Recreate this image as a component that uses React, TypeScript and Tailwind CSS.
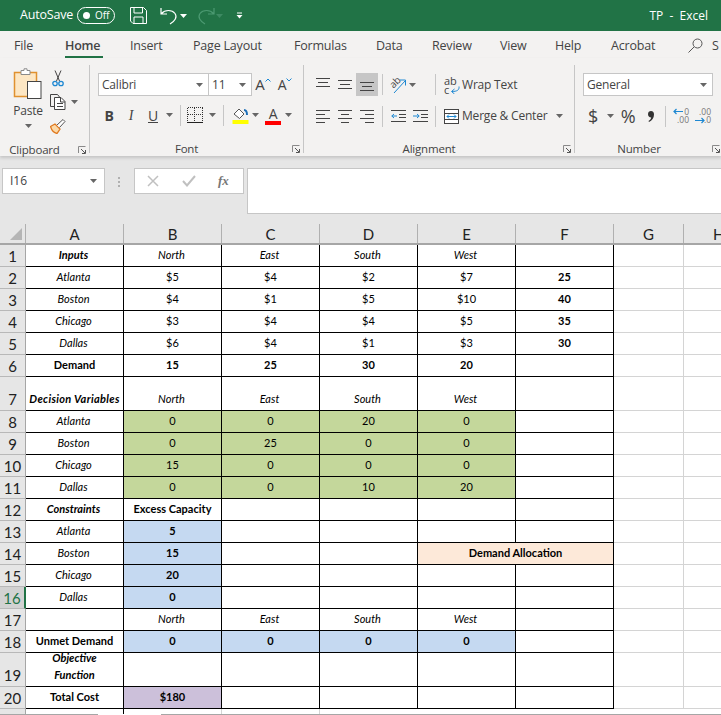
import React from "react";

type Cell = { t?: string; s?: string; bg?: string; span?: boolean };

const ital = "italic pr-[2px]";
const bold = "font-bold";
const both = "font-bold italic pr-[2px]";
const green = "bg-[#c4d79b]";
const blue = "bg-[#c5d9f1]";

const heads = (first: Cell): Cell[] => [
  first,
  { t: "North", s: ital },
  { t: "East", s: ital },
  { t: "South", s: ital },
  { t: "West", s: ital },
  {},
];

const city = (name: string, vals: string[], last?: string): Cell[] => [
  { t: name, s: ital },
  ...vals.map((t) => ({ t })),
  { t: last, s: bold },
];

const decision = (name: string, vals: string[]): Cell[] => [
  { t: name, s: ital },
  ...vals.map((t) => ({ t, bg: green })),
  {},
];

const excess = (name: string, val: string, rest: Cell[] = [{}, {}, {}, {}]): Cell[] => [
  { t: name, s: ital },
  { t: val, s: bold, bg: blue },
  ...rest,
];

const rows: { n: number; h: string; cells: Cell[]; tall?: boolean }[] = [
  { n: 1, h: "h-[22px]", cells: heads({ t: "Inputs", s: both }) },
  { n: 2, h: "h-[22px]", cells: city("Atlanta", ["$5", "$4", "$2", "$7"], "25") },
  { n: 3, h: "h-[22px]", cells: city("Boston", ["$4", "$1", "$5", "$10"], "40") },
  { n: 4, h: "h-[22px]", cells: city("Chicago", ["$3", "$4", "$4", "$5"], "35") },
  { n: 5, h: "h-[22px]", cells: city("Dallas", ["$6", "$4", "$1", "$3"], "30") },
  {
    n: 6,
    h: "h-[22px]",
    cells: [
      { t: "Demand", s: bold },
      { t: "15", s: bold },
      { t: "25", s: bold },
      { t: "30", s: bold },
      { t: "20", s: bold },
      {},
    ],
  },
  { n: 7, h: "h-[34px]", tall: true, cells: heads({ t: "Decision Variables", s: "font-bold italic tracking-[0.33px]" }) },
  { n: 8, h: "h-[22px]", cells: decision("Atlanta", ["0", "0", "20", "0"]) },
  { n: 9, h: "h-[22px]", cells: decision("Boston", ["0", "25", "0", "0"]) },
  { n: 10, h: "h-[22px]", cells: decision("Chicago", ["15", "0", "0", "0"]) },
  { n: 11, h: "h-[22px]", cells: decision("Dallas", ["0", "0", "10", "20"]) },
  {
    n: 12,
    h: "h-[22px]",
    cells: [{ t: "Constraints", s: both }, { t: "Excess Capacity", s: bold }, {}, {}, {}, {}],
  },
  { n: 13, h: "h-[22px]", cells: excess("Atlanta", "5") },
  {
    n: 14,
    h: "h-[22px]",
    cells: excess("Boston", "15", [{}, {}, { t: "Demand Allocation", s: bold, bg: "bg-[#fde9d9]", span: true }]),
  },
  { n: 15, h: "h-[22px]", cells: excess("Chicago", "20") },
  { n: 16, h: "h-[22px]", cells: excess("Dallas", "0") },
  { n: 17, h: "h-[22px]", cells: heads({}) },
  {
    n: 18,
    h: "h-[22px]",
    cells: [
      { t: "Unmet Demand", s: bold },
      { t: "0", s: bold, bg: blue },
      { t: "0", s: bold, bg: blue },
      { t: "0", s: bold, bg: blue },
      { t: "0", s: bold, bg: blue },
      {},
    ],
  },
  { n: 19, h: "h-[34px]", tall: true, cells: [{ t: "Objective Function", s: "font-bold italic" }, {}, {}, {}, {}, {}] },
  { n: 20, h: "h-[22px]", cells: [{ t: "Total Cost", s: bold }, { t: "$180", s: bold, bg: "bg-[#ccc0da]" }, {}, {}, {}, {}] },
];

function Caret({ light }: { light?: boolean }) {
  return (
    <svg width="7" height="4" viewBox="0 0 7 4" className="shrink-0">
      <path d="M0 0h7L3.5 4z" fill={light ? "#3e8a63" : "#666"} />
    </svg>
  );
}

function Sep({ className }: { className: string }) {
  return <div className={`h-[21px] w-px shrink-0 bg-[#c6c6c6] ${className}`} />;
}

function Btn({ w, children, className = "" }: { w: string; children?: React.ReactNode; className?: string }) {
  return <div className={`flex h-[22px] shrink-0 items-center justify-center ${w} ${className}`}>{children}</div>;
}

function Launcher() {
  return (
    <div className="flex h-[14px] w-[20px] shrink-0 items-center pl-[9px]">
      <svg width="8" height="8" viewBox="0 0 8 8">
        <path d="M0.5 7V0.5H7.5" fill="none" stroke="#8a8a8a" />
        <path d="M3 3L7 7M4 7.5H7.5V4" fill="none" stroke="#555" />
      </svg>
    </div>
  );
}

function GroupLabel({ text }: { text: string }) {
  return (
    <div className="flex h-[16px] items-center pt-[8px]">
      <div className="flex-1 text-center text-[11.5px] leading-none text-[#444]">{text}</div>
      <Launcher />
    </div>
  );
}

function Combo({ text, w, className = "" }: { text: string; w: string; className?: string }) {
  return (
    <div className={`flex h-[23px] shrink-0 items-center justify-between border border-[#c6c6c6] bg-white pl-[3px] pr-[5px] text-[12px] text-[#444] ${w} ${className}`}>
      <span>{text}</span>
      <Caret />
    </div>
  );
}

function Lines({ kind }: { kind: string }) {
  const d: Record<string, string> = {
    top: "M1 1.5h14M3 5.5h10M1 9.5h14",
    mid: "M1 3.5h14M3 7.5h10M1 11.5h14",
    bot: "M1 5.5h14M3 9.5h10M1 13.5h14",
    left: "M1 2.5h14M1 6.5h9M1 10.5h14M1 14.5h9",
    center: "M1 2.5h14M4 6.5h8M1 10.5h14M4 14.5h8",
    right: "M1 2.5h14M6 6.5h9M1 10.5h14M6 14.5h9",
  };
  return (
    <svg width="16" height="16" viewBox="0 0 16 16">
      <path d={d[kind]} stroke="#444" fill="none" />
    </svg>
  );
}

function Indent({ flip }: { flip?: boolean }) {
  return (
    <svg width="15" height="14" viewBox="0 0 15 14">
      <path d="M0 1.5h15M8 5.5h7M8 8.5h7M0 12.5h15" stroke="#444" fill="none" />
      <path d={flip ? "M0 7h6M4 5l2.2 2L4 9" : "M6 7H0.8M3 5L0.8 7L3 9"} stroke="#1e88d2" fill="none" />
    </svg>
  );
}

function Clipboard() {
  return (
    <svg width="30" height="32" viewBox="0 0 30 32">
      <rect x="1.5" y="4.5" width="22" height="24" fill="#fde7c4" stroke="#e0912f" strokeWidth="1.5" />
      <path d="M8 4.5V2.5H11V0.8H14V2.5H17V6.5H8z" fill="#fff" stroke="#8a8a8a" />
      <rect x="14.5" y="13.5" width="13.5" height="17" fill="#fff" stroke="#444" />
    </svg>
  );
}

function Scissors() {
  return (
    <svg width="12" height="17" viewBox="0 0 12 17">
      <path d="M3 0.5L7.5 11M9 0.5L4.5 11" stroke="#444" fill="none" />
      <circle cx="3" cy="13.5" r="2.2" fill="none" stroke="#1e88d2" strokeWidth="1.3" />
      <circle cx="9" cy="13.5" r="2.2" fill="none" stroke="#1e88d2" strokeWidth="1.3" />
    </svg>
  );
}

function CopyIcon() {
  return (
    <svg width="16" height="16" viewBox="0 0 16 16">
      <path d="M4.5 12.5H0.5V0.5H7.5L9.5 3" fill="none" stroke="#444" />
      <path d="M4.5 3.5H11L15 7.5V15.5H4.5z" fill="#fff" stroke="#444" />
      <path d="M7 9.5h6M7 12.5h6M10.5 3.5V8H15" fill="none" stroke="#444" />
    </svg>
  );
}

function Painter() {
  return (
    <svg width="16" height="16" viewBox="0 0 16 16">
      <path d="M0.5 8.5L5 6L10 11L7 15.5C4 15 1.5 12 0.5 8.5z" fill="#fbd9a8" stroke="#e0791f" strokeWidth="1.3" />
      <path d="M7 7L13 1.5L15 3.5L9.5 9.5" fill="#fff" stroke="#555" />
    </svg>
  );
}

function Borders() {
  return (
    <svg width="16" height="16" viewBox="0 0 16 16" shapeRendering="crispEdges">
      <path d="M0.5 0.5h15M0.5 7.5h15M0.5 0.5v14M7.5 0.5v14M15.5 0.5v14" stroke="#333" strokeDasharray="1 1" fill="none" />
      <path d="M0 15h16" stroke="#222" strokeWidth="1" />
    </svg>
  );
}

function FillBucket() {
  return (
    <svg width="17" height="17" viewBox="0 0 17 17">
      <path d="M2 7L7 2L12 7L7.5 11.5z" fill="#fff" stroke="#555" />
      <path d="M12 3C14 3 15 5 15 8" fill="none" stroke="#1e6fb8" strokeWidth="2" />
      <rect x="0.5" y="13" width="16" height="4" fill="#ffff00" />
    </svg>
  );
}

function Orient() {
  return (
    <div className="relative h-[18px] w-[18px] text-[10px] leading-none text-[#444]">
      <span className="absolute left-0 top-[1px] -rotate-45">ab</span>
      <svg width="18" height="18" viewBox="0 0 18 18" className="absolute left-0 top-0">
        <path d="M5 17L16 5M11 4h5.5v5.5" fill="none" stroke="#1e88d2" />
      </svg>
    </div>
  );
}

function WrapIcon() {
  return (
    <div className="relative h-[19px] w-[16px] pt-px text-[11px] leading-[9px] text-[#444]">
      <div>ab</div>
      <div>c</div>
      <svg width="10" height="8" viewBox="0 0 10 8" className="absolute bottom-0 right-0">
        <path d="M9 0.5C9.5 4 7 5.5 2 5.5M4.5 3L1.5 5.5L4.5 8" fill="none" stroke="#1e88d2" />
      </svg>
    </div>
  );
}

function MergeIcon() {
  return (
    <svg width="15" height="15" viewBox="0 0 15 15">
      <rect x="0.5" y="0.5" width="14" height="14" fill="#fff" stroke="#444" />
      <path d="M0.5 4.5h14M0.5 10.5h14" stroke="#444" />
      <path d="M3 7.5h9M5 5.5L3 7.5L5 9.5M10 5.5L12 7.5L10 9.5" fill="none" stroke="#1e88d2" />
    </svg>
  );
}

function Decimal({ more }: { more?: boolean }) {
  return (
    <div className="relative h-[16px] w-[16px] text-[8.5px] leading-[8px] tracking-normal text-[#777]">
      <div className="text-right">{more ? "0" : ".00"}</div>
      <div className="text-right">{more ? ".00" : ".0"}</div>
      <svg width="10" height="7" viewBox="0 0 10 7" className={`absolute left-0 ${more ? "top-0" : "bottom-0"}`}>
        <path d={more ? "M10 3.5H1M3.5 1L1 3.5L3.5 6" : "M0 3.5H9M6.5 1L9 3.5L6.5 6"} fill="none" stroke="#1e88d2" strokeWidth="1.2" />
      </svg>
    </div>
  );
}

function Chevron({ down }: { down?: boolean }) {
  return (
    <svg width="6" height="4" viewBox="0 0 6 4" className="-mt-[9px] shrink-0">
      <path d={down ? "M0.5 0.5L3 3L5.5 0.5" : "M0.5 3.5L3 1L5.5 3.5"} fill="none" stroke="#1e88d2" />
    </svg>
  );
}

const tabs = [
  { t: "File", c: "ml-[14px] w-[19px]" },
  { t: "Home", c: "ml-[32px] w-[38px]" },
  { t: "Insert", c: "ml-[27px] w-[32px]" },
  { t: "Page Layout", c: "ml-[31px] w-[71px]" },
  { t: "Formulas", c: "ml-[30px] w-[53px]" },
  { t: "Data", c: "ml-[29px] w-[27px]" },
  { t: "Review", c: "ml-[29px] w-[40px]" },
  { t: "View", c: "ml-[28px] w-[27px]" },
  { t: "Help", c: "ml-[28px] w-[26px]" },
  { t: "Acrobat", c: "ml-[30px] w-[46px]" },
];

function TitleBar() {
  return (
    <div className="flex h-[31px] items-center bg-[#217346] text-white">
      <span className="ml-[20px] w-[50px] whitespace-nowrap text-[12.5px] tracking-[-0.2px]">AutoSave</span>
      <div className="ml-[7px] flex h-[17px] w-[38px] items-center rounded-full border border-white pl-[5px]">
        <div className="h-[7px] w-[7px] rounded-full bg-white" />
        <span className="ml-[5px] text-[10px]">Off</span>
      </div>
      <svg width="17" height="17" viewBox="0 0 17 17" className="ml-[15px]">
        <path d="M0.5 0.5H13.5L16.5 3.5V16.5H3L0.5 14z" fill="none" stroke="#fff" />
        <path d="M4 0.5V6H12.5V0.5M4 16.5V10H13V16.5" fill="none" stroke="#fff" />
      </svg>
      <svg width="18" height="18" viewBox="0 0 18 18" className="ml-[13px]">
        <path d="M1 1V7H7M1.5 6.5C5 2.5 12 2.5 15 6.5C17.5 10 15 14 10 17" fill="none" stroke="#fff" strokeWidth="1.2" />
      </svg>
      <svg width="7" height="4" viewBox="0 0 7 4" className="ml-[2px]">
        <path d="M0 0h7L3.5 4z" fill="#fff" />
      </svg>
      <svg width="18" height="18" viewBox="0 0 18 18" className="ml-[10px]">
        <path d="M17 1V7H11M16.5 6.5C13 2.5 6 2.5 3 6.5C0.5 10 3 14 8 17" fill="none" stroke="#4c9a72" strokeWidth="1.2" />
      </svg>
      <div className="ml-[1px]">
        <Caret light />
      </div>
      <svg width="7" height="7" viewBox="0 0 7 7" className="ml-[13px]">
        <path d="M1 1h5" stroke="#fff" />
        <path d="M0.5 3h6L3.5 6.5z" fill="#fff" />
      </svg>
      <span className="ml-auto mr-[13px] whitespace-pre text-[12px]">TP  -  Excel</span>
    </div>
  );
}

function TabRow() {
  return (
    <div className="flex h-[27px] items-start bg-[#f3f2f1] pt-[6px] text-[12.5px] tracking-[-0.2px] text-[#444]">
      {tabs.map((tab) =>
        tab.t === "Home" ? (
          <div key={tab.t} className={`${tab.c} flex h-[21px] shrink-0 flex-col whitespace-nowrap border-b-[2px] border-[#217346] font-semibold text-[#444]`}>
            {tab.t}
          </div>
        ) : (
          <div key={tab.t} className={`${tab.c} shrink-0 whitespace-nowrap`}>
            {tab.t}
          </div>
        )
      )}
      <svg width="15" height="15" viewBox="0 0 15 15" className="ml-[31px] mt-[1px] shrink-0">
        <circle cx="9.5" cy="5.5" r="4.5" fill="none" stroke="#555" />
        <path d="M6 9L0.5 14.5" stroke="#555" />
      </svg>
      <span className="ml-[9px]">S</span>
    </div>
  );
}

function Ribbon() {
  return (
    <div className="relative z-10 flex h-[98px] bg-[#f3f2f1] pb-[3px] pt-[7px] tracking-[-0.2px] shadow-[0_2px_3px_rgba(0,0,0,0.15)]">
      {/* Clipboard */}
      <div className="flex w-[90px] shrink-0 flex-col border-r border-[#c6c6c6]">
        <div className="flex flex-1">
          <div className="ml-[13px] flex w-[30px] flex-col items-center pt-[3px]">
            <Clipboard />
            <span className="mt-[3px] text-[12px] leading-[16px] text-[#444]">Paste</span>
            <div className="mt-[5px]">
              <Caret />
            </div>
          </div>
          <div className="ml-[7px] flex flex-col">
            <Btn w="w-[16px]" className="mt-[1px] h-[24px]">
              <Scissors />
            </Btn>
            <div className="flex h-[24px] items-center">
              <CopyIcon />
              <div className="ml-[5px]">
                <Caret />
              </div>
            </div>
            <Btn w="w-[16px]" className="h-[24px]">
              <Painter />
            </Btn>
          </div>
        </div>
        <GroupLabel text="Clipboard" />
      </div>

      {/* Font */}
      <div className="flex w-[214px] shrink-0 flex-col border-r border-[#c6c6c6]">
        <div className="flex-1 pt-[8px]">
          <div className="flex items-center pl-[8px]">
            <Combo text="Calibri" w="w-[111px]" />
            <Combo text="11" w="w-[44px]" className="-ml-px" />
            <Btn w="w-[22px]" className="text-[15px] text-[#444]">
              A
              <Chevron />
            </Btn>
            <Btn w="w-[22px]" className="text-[14px] text-[#444]">
              A
              <Chevron down />
            </Btn>
          </div>
          <div className="mt-[8px] flex items-center pl-[8px] font-['Liberation_Serif',serif] text-[14px] text-[#444]">
            <Btn w="w-[22px]" className="font-['Open_Sans',sans-serif] font-bold">B</Btn>
            <Btn w="w-[22px]" className="italic">I</Btn>
            <Btn w="w-[22px]" className="font-['Open_Sans',sans-serif] underline">U</Btn>
            <Btn w="w-[11px]"><Caret /></Btn>
            <Sep className="ml-[5px]" />
            <Btn w="w-[28px]"><Borders /></Btn>
            <Btn w="w-[7px]"><Caret /></Btn>
            <Sep className="ml-[7px]" />
            <Btn w="w-[22px]" className="ml-[5px]"><FillBucket /></Btn>
            <Btn w="w-[8px]"><Caret /></Btn>
            <div className="ml-[3px] flex h-[22px] w-[22px] shrink-0 flex-col items-center justify-center font-['Open_Sans',sans-serif] text-[14px] leading-[15px] text-[#444]">
              A
              <div className="h-[4px] w-[16px] bg-[#ff0000]" />
            </div>
            <Btn w="w-[9px]"><Caret /></Btn>
          </div>
        </div>
        <GroupLabel text="Font" />
      </div>

      {/* Alignment */}
      <div className="flex w-[271px] shrink-0 flex-col border-r border-[#c6c6c6]">
        <div className="flex-1 pt-[8px] text-[12px] text-[#444]">
          <div className="flex h-[23px] items-center pl-[8px]">
            <Btn w="w-[22px]"><Lines kind="top" /></Btn>
            <Btn w="w-[22px]"><Lines kind="mid" /></Btn>
            <Btn w="w-[22px]" className="h-[23px] bg-[#c6c6c6]"><Lines kind="bot" /></Btn>
            <Sep className="ml-[4px]" />
            <Btn w="w-[22px]" className="ml-[4px]"><Orient /></Btn>
            <Btn w="w-[7px]"><Caret /></Btn>
            <Sep className="ml-[19px]" />
            <Btn w="w-[18px]" className="ml-[7px]"><WrapIcon /></Btn>
            <span className="ml-px">Wrap Text</span>
          </div>
          <div className="mt-[9px] flex h-[22px] items-center pl-[8px]">
            <Btn w="w-[22px]"><Lines kind="left" /></Btn>
            <Btn w="w-[22px]"><Lines kind="center" /></Btn>
            <Btn w="w-[22px]"><Lines kind="right" /></Btn>
            <Sep className="ml-[4px]" />
            <Btn w="w-[22px]" className="ml-[4px]"><Indent /></Btn>
            <Btn w="w-[22px]"><Indent flip /></Btn>
            <Sep className="ml-[4px]" />
            <Btn w="w-[18px]" className="ml-[6px]"><MergeIcon /></Btn>
            <span className="ml-[2px]">Merge &amp; Center</span>
            <div className="ml-[9px]"><Caret /></div>
          </div>
        </div>
        <GroupLabel text="Alignment" />
      </div>

      {/* Number */}
      <div className="flex w-[148px] shrink-0 flex-col">
        <div className="flex-1 pt-[8px]">
          <div className="flex pl-[8px]">
            <Combo text="General" w="w-[130px]" />
          </div>
          <div className="mt-[9px] flex items-center pl-[7px] text-[#444]">
            <Btn w="w-[22px]" className="text-[18px]">$</Btn>
            <Btn w="w-[8px]" className="ml-[2px]"><Caret /></Btn>
            <Btn w="w-[22px]" className="ml-[3px] text-[18px]">%</Btn>
            <Btn w="w-[22px]" className="ml-px">
              <svg width="6" height="11" viewBox="0 0 6 11">
                <path d="M3 0C5 0 6 1.5 6 3.5C6 7 4 9.5 1 11L0.5 10C2 9 3 8 3.2 6.5C1.2 6.5 0 5 0 3.2C0 1.2 1.3 0 3 0z" fill="#333" />
              </svg>
            </Btn>
            <Sep className="ml-[3px]" />
            <Btn w="w-[22px]" className="ml-[4px]"><Decimal more /></Btn>
            <Btn w="w-[22px]"><Decimal /></Btn>
          </div>
        </div>
        <GroupLabel text="Number" />
      </div>
    </div>
  );
}

function FormulaBar() {
  return (
    <div className="flex h-[68px] items-start bg-[#e6e6e6] pt-[12px]">
      <div className="ml-[2px] flex h-[26px] w-[103px] items-center justify-between border border-[#c6c6c6] bg-white pl-[7px] pr-[7px] text-[12px] text-[#444]">
        <span>I16</span>
        <Caret />
      </div>
      <div className="ml-[13px] mt-[9px] flex flex-col gap-[2px]">
        <div className="h-[2px] w-[2px] bg-[#b0b0b0]" />
        <div className="h-[2px] w-[2px] bg-[#b0b0b0]" />
        <div className="h-[2px] w-[2px] bg-[#b0b0b0]" />
      </div>
      <div className="ml-[14px] flex h-[26px] w-[110px] items-center border border-[#c6c6c6] bg-white">
        <svg width="12" height="12" viewBox="0 0 12 12" className="ml-[12px]">
          <path d="M1 1L11 11M11 1L1 11" stroke="#c0c0c0" strokeWidth="1.5" />
        </svg>
        <svg width="14" height="12" viewBox="0 0 14 12" className="ml-[23px]">
          <path d="M1 6L5 10.5L13 1" fill="none" stroke="#c0c0c0" strokeWidth="2" />
        </svg>
        <span className="ml-[22px] font-['Liberation_Serif',serif] text-[13px] font-bold italic text-[#777]">fx</span>
      </div>
      <div className="ml-[3px] h-[46px] flex-1 border border-r-0 border-[#c6c6c6] bg-white" />
    </div>
  );
}

function ColumnHeaders() {
  const cols = ["A", "B", "C", "D", "E", "F"];
  return (
    <div className="flex h-[21px] border-b-2 border-[#a6a6a6] bg-[#e6e6e6] font-['Lato',sans-serif] text-[15px] leading-[21px] text-[#222]">
      <div className="flex w-[26px] shrink-0 items-end justify-end border-r border-[#b0b0b0] pb-[3px] pr-[3px]">
        <svg width="12" height="12" viewBox="0 0 12 12">
          <path d="M12 0V12H0z" fill="#b5b5b5" />
        </svg>
      </div>
      {cols.map((c) => (
        <div key={c} className="w-[98px] shrink-0 border-r border-[#b0b0b0] text-center">
          {c}
        </div>
      ))}
      <div className="w-[70px] shrink-0 border-r border-[#b0b0b0] text-center">G</div>
      <div className="flex-1 pl-[29px]">H</div>
    </div>
  );
}

function SheetRow({ n, h, cells, tall }: { n: number; h: string; cells: Cell[]; tall?: boolean }) {
  const active = n === 16;
  const wrap = n === 19;
  return (
    <div className={`flex ${h}`}>
      <div
        className={`flex w-[26px] shrink-0 justify-center border-b border-[#b8b8b8] text-[15px] leading-[20px] ${tall ? "items-end pb-[1px]" : "items-center"} ${
          active ? "border-r-2 border-r-[#217346] bg-[#d2d2d2] text-[#217346]" : "border-r border-r-[#a6a6a6] bg-[#e6e6e6] text-[#222]"
        }`}
      >
        {n}
      </div>
      {cells.map((c, i) => (
        <div
          key={i}
          className={`flex shrink-0 justify-center border-b border-r border-black text-center text-[11px] text-black ${c.span ? "w-[196px]" : "w-[98px]"} ${
            tall ? "items-end pb-[3px]" : "items-center"
          } ${c.s ?? ""} ${c.bg ?? "bg-white"}`}
        >
          {wrap && c.t ? <span className="w-[70px] leading-[17px]">{c.t}</span> : c.t}
        </div>
      ))}
      <div className="w-[70px] shrink-0 border-b border-r border-[#d4d4d4] bg-white" />
      <div className="flex-1 border-b border-[#d4d4d4] bg-white" />
    </div>
  );
}

export default function App() {
  return (
    <div className="h-[715px] w-[721px] overflow-hidden bg-white font-['Open_Sans',sans-serif]">
      <TitleBar />
      <TabRow />
      <Ribbon />
      <FormulaBar />
      <ColumnHeaders />
      <div className="font-['Lato',sans-serif]">
        {rows.map((r) => (
          <SheetRow key={r.n} n={r.n} h={r.h} cells={r.cells} tall={r.tall} />
        ))}
        <div className="flex h-[5px]">
          <div className="w-[26px] shrink-0 border-r border-[#a6a6a6] bg-[#e6e6e6]" />
          <div className="w-[98px] shrink-0 border-r border-black" />
          <div className="w-[98px] shrink-0 border-r border-[#d4d4d4]" />
          <div className="w-[98px] shrink-0 border-r border-[#d4d4d4]" />
        </div>
        <div className="flex h-px">
          <div className="w-[98px] bg-[#a6a6a6]" />
          <div className="ml-[63px] flex-1 bg-[#a6a6a6]" />
        </div>
      </div>
    </div>
  );
}
